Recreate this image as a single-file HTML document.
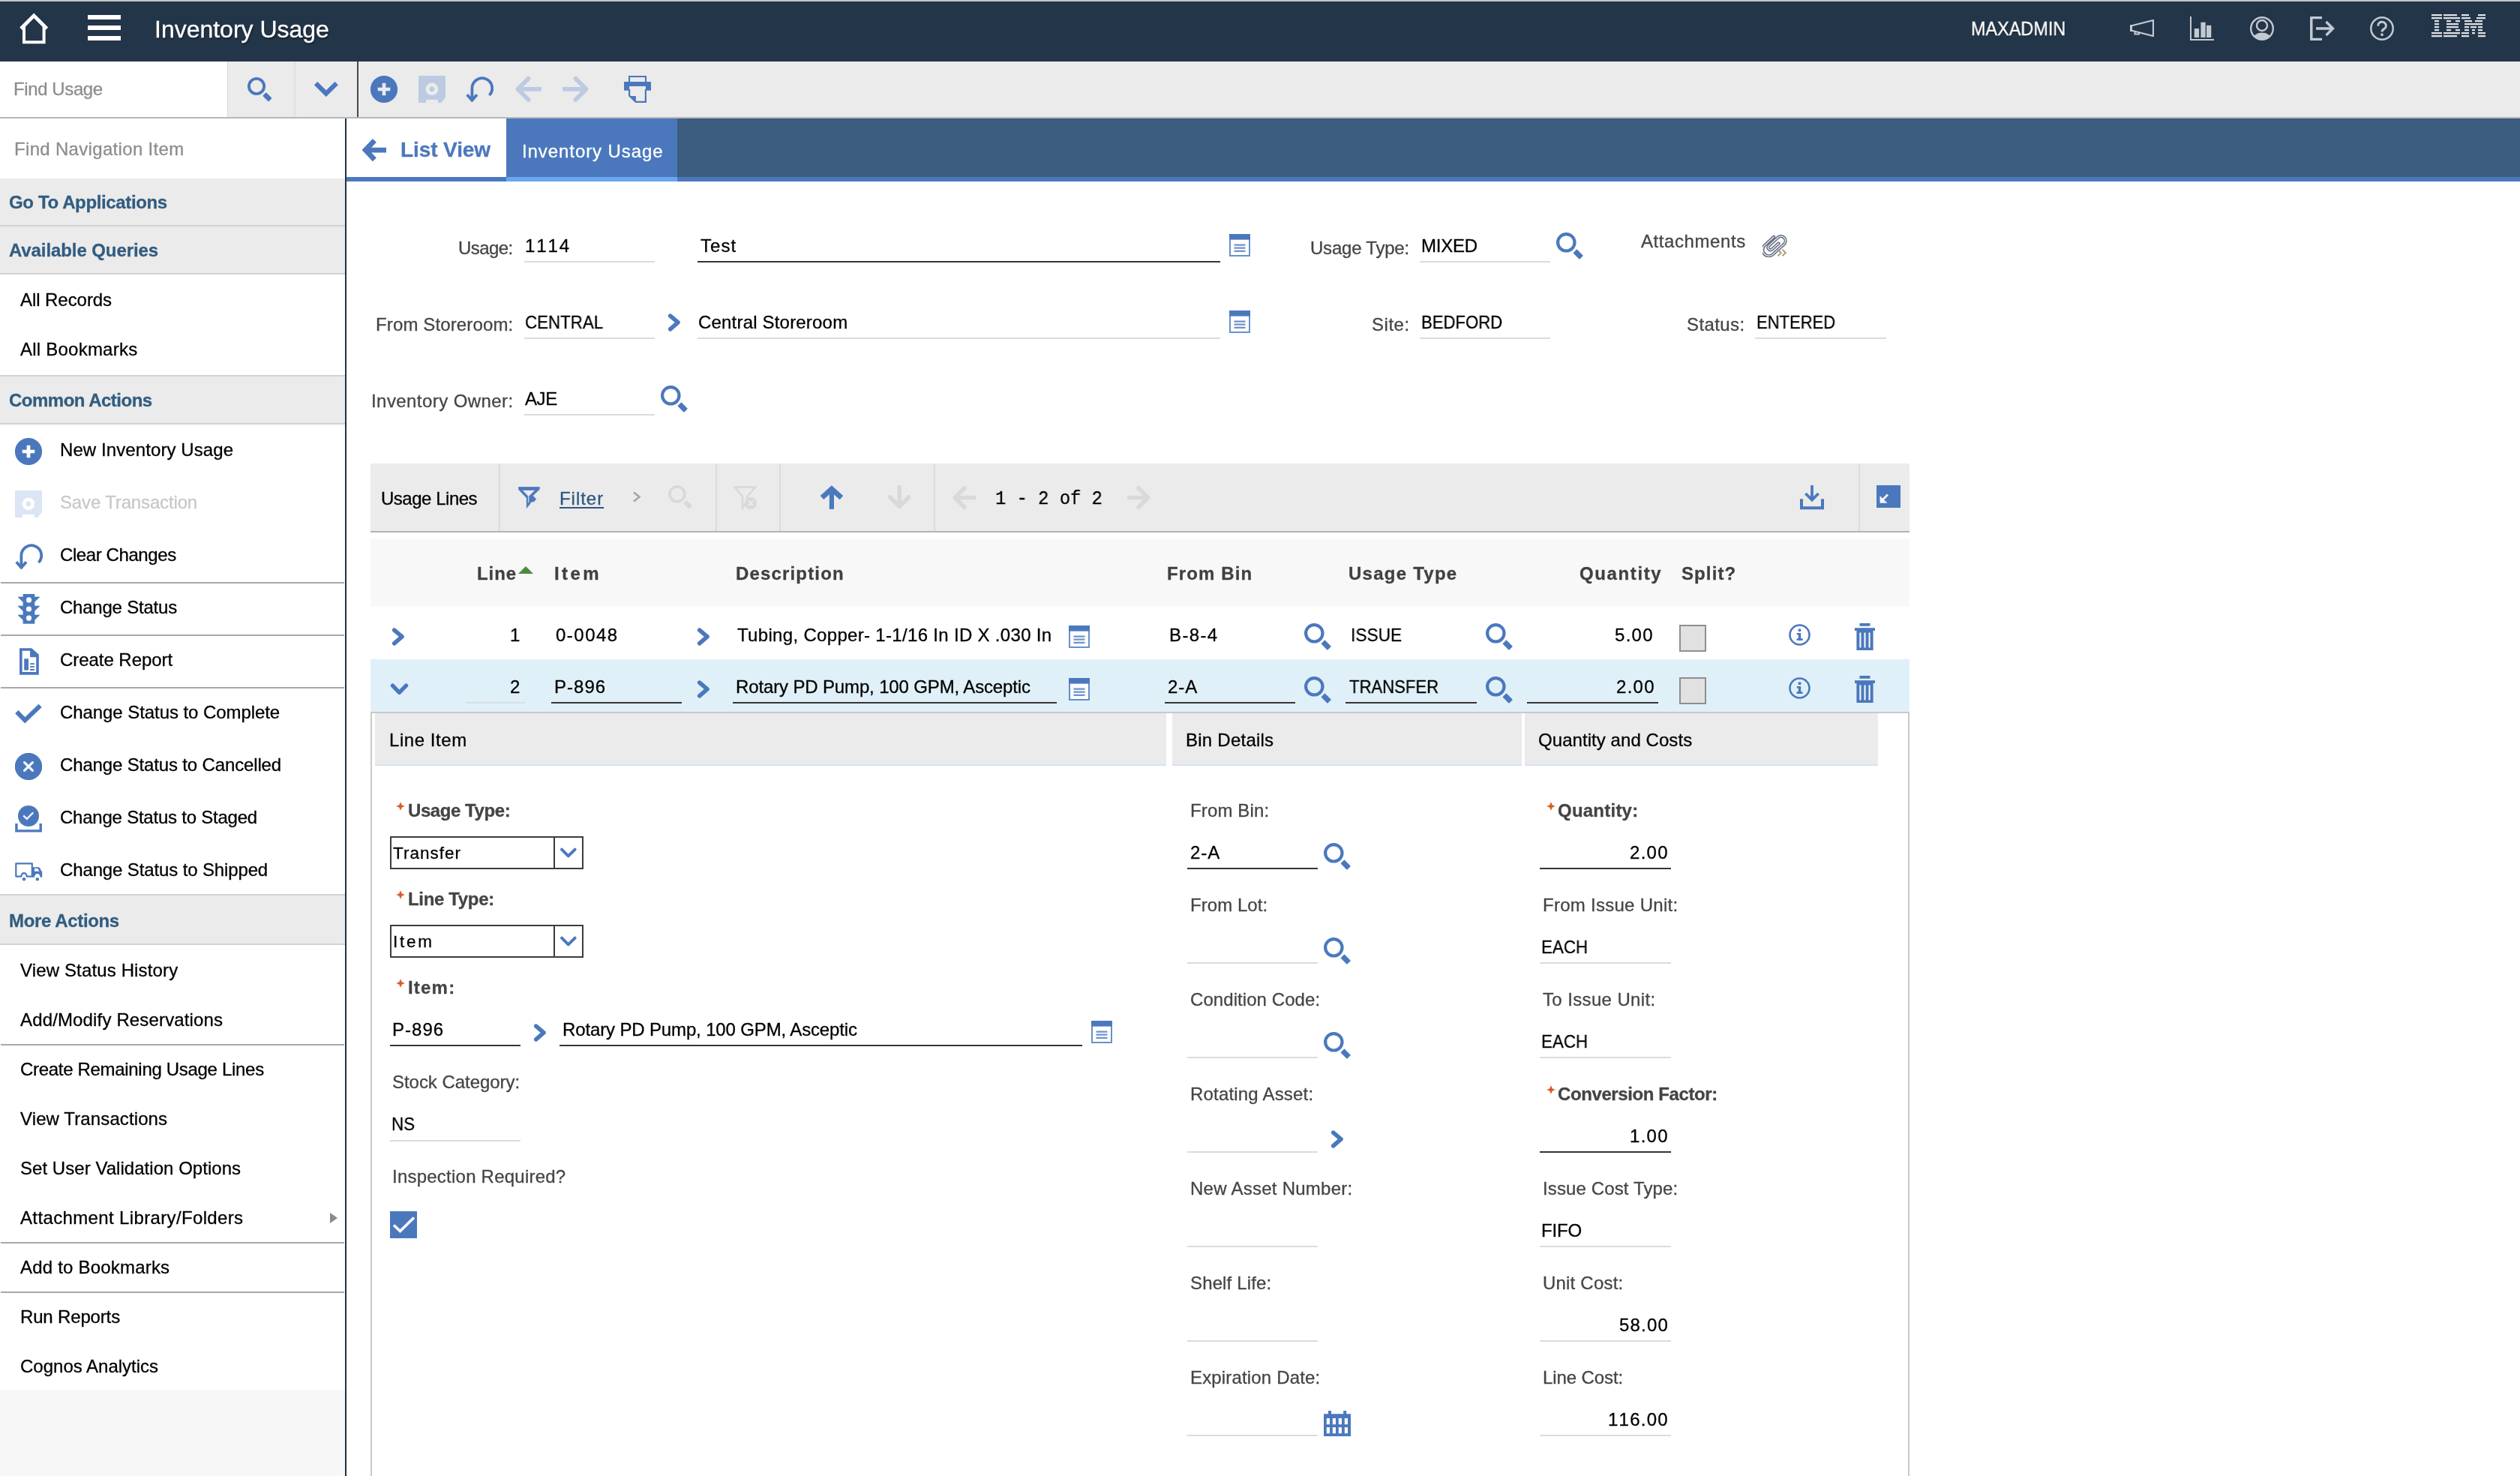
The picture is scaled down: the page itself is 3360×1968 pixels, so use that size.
<!DOCTYPE html>
<html><head><meta charset="utf-8"><title>Inventory Usage</title>
<style>
html,body{margin:0;padding:0;}
body{width:3360px;height:1968px;position:relative;overflow:hidden;background:#fff;font-family:"Liberation Sans",sans-serif;}
body>div,body>span,body>svg{position:absolute;display:block;}
body>span{white-space:nowrap;will-change:transform;-webkit-text-stroke:0.3px currentColor;}
svg{overflow:visible;}
</style></head><body>
<svg width="0" height="0" style="position:absolute"><defs>
<symbol id="home" viewBox="0 0 40 42"><path d="M1.9,21.3 L19.2,3.9 L36.5,21.3" fill="none" stroke="currentColor" stroke-width="4.8"/><path d="M6,19 V39.3 H32.6 V19" fill="none" stroke="currentColor" stroke-width="4"/></symbol>
<symbol id="mag" viewBox="0 0 36 36"><circle cx="13.3" cy="13.3" r="11.2" fill="none" stroke="currentColor" stroke-width="4.2"/><rect x="-6.1" y="-3.6" width="12.2" height="7.2" rx="1" transform="translate(29.2 29.1) rotate(45)" fill="currentColor"/></symbol>
<symbol id="chevd" viewBox="0 0 32 20"><path d="M2.1,2.1 L15.8,15.7 L29.7,2.1" fill="none" stroke="currentColor" stroke-width="6.2"/></symbol>
<symbol id="plusc" viewBox="0 0 36 36"><circle cx="18" cy="18" r="18.1" fill="currentColor"/><path d="M9.7,18 H26.3 M18,9.7 V26.3" stroke="var(--k,#fff)" stroke-width="4.7" fill="none"/></symbol>
<symbol id="save" viewBox="0 0 36 36"><path d="M0,0 H36 V28.7 L30.3,36 H26 V32 H10 V36 H0 Z" fill="currentColor"/><circle cx="17.9" cy="17.8" r="5.85" fill="none" stroke="var(--k,#fff)" stroke-width="4.9"/></symbol>
<symbol id="undo" viewBox="0 0 37 34"><path d="M8.4,31 V15.8 A13.4,13.4 0 1 1 31.4,25" fill="none" stroke="currentColor" stroke-width="3.8"/><path d="M1.8,24.2 L8.4,31.8 L15,24.2" fill="none" stroke="currentColor" stroke-width="3.8"/></symbol>
<symbol id="arl" viewBox="0 0 36 36"><path d="M5,17.8 H35.7 M18.6,3.6 L4.4,17.8 L18.6,32" fill="none" stroke="currentColor" stroke-width="5.8" stroke-linecap="round" stroke-linejoin="round"/></symbol>
<symbol id="arr" viewBox="0 0 36 36"><path d="M31,17.8 H0.3 M17.4,3.6 L31.6,17.8 L17.4,32" fill="none" stroke="currentColor" stroke-width="5.8" stroke-linecap="round" stroke-linejoin="round"/></symbol>
<symbol id="print" viewBox="0 0 36 36"><rect x="7" y="1" width="22" height="9" fill="var(--k,#ebebeb)" stroke="currentColor" stroke-width="2.1"/><rect x="0" y="8" width="36" height="11.7" fill="currentColor"/><path d="M7.1,14 H28.9 V34.8 H15.6 L7.1,26.6 Z" fill="var(--k,#ebebeb)"/><path d="M7.1,18 V26.6 L15.6,34.8 H28.9 V18" fill="none" stroke="currentColor" stroke-width="2.2"/><path d="M6.6,27 H15.9 V35.4 Z" fill="currentColor"/></symbol>
<symbol id="back" viewBox="0 0 33 32"><path d="M7,16.1 H32.6" fill="none" stroke="currentColor" stroke-width="6.9" stroke-linecap="round"/><path d="M17.4,3.3 L5.3,16.1 L17.4,28.9" fill="none" stroke="currentColor" stroke-width="6.9"/></symbol>
<symbol id="traffic" viewBox="0 0 29 40"><rect x="6.6" y="0" width="15.7" height="39.7" fill="currentColor"/><path d="M0.1,4.1 H6.8 V10.5 Z M0.1,16.1 H6.8 V22.5 Z M0.1,28.1 H6.8 V34.5 Z M28.7,4.1 H22 V10.5 Z M28.7,16.1 H22 V22.5 Z M28.7,28.1 H22 V34.5 Z" fill="currentColor" stroke="currentColor" stroke-width="0.8" stroke-linejoin="round"/><circle cx="14.5" cy="7.9" r="3.6" fill="#fff"/><circle cx="14.5" cy="20" r="3.6" fill="#fff"/><circle cx="14.5" cy="32.1" r="3.6" fill="#fff"/></symbol>
<symbol id="report" viewBox="0 0 26 36"><path fill-rule="evenodd" d="M0,0.2 H16.2 L25.8,8.8 V35.7 H0 Z M3.6,3.8 V32.1 H22.2 V12.2 H14.1 V3.8 Z" fill="currentColor"/><rect x="6.2" y="14.3" width="5.8" height="15.3" fill="currentColor"/><path d="M14.1,21.1 H20 M14.1,25.1 H20 M14.1,29 H20" stroke="currentColor" stroke-width="1.9" fill="none"/></symbol>
<symbol id="check" viewBox="0 0 37 27"><path d="M2.3,11.2 L13.3,22.3 L33.6,2.8" fill="none" stroke="currentColor" stroke-width="6"/></symbol>
<symbol id="xc" viewBox="0 0 36 36"><circle cx="18" cy="18" r="18.2" fill="currentColor"/><path d="M12.6,12.6 L23.4,23.4 M23.4,12.6 L12.6,23.4" stroke="#fff" stroke-width="3.2" stroke-linecap="round" opacity="0.95" fill="none"/></symbol>
<symbol id="staged" viewBox="0 0 36 37"><circle cx="18" cy="14" r="14" fill="currentColor"/><path d="M11.2,13.5 L15.8,17.8 L24.3,9.3" stroke="#fff" stroke-width="2.4" opacity="0.9" fill="none"/><path d="M1.9,24.1 V33.9 H34.2 V24.1" fill="none" stroke="currentColor" stroke-width="3.4"/></symbol>
<symbol id="truck" viewBox="0 0 37 25"><path d="M8.2,18.6 H1.3 V1.3 H22.8 V18.6 H15.8 Q15,14.2 12,14.2 Q9,14.2 8.2,18.6 Z" fill="none" stroke="currentColor" stroke-width="2.2" stroke-linejoin="round"/><path d="M22.8,6.2 H31 Q34,6.6 34.5,10.6 L36.2,12 V19.7 H33.8 Q33,15 29.8,15 Q26.6,15 25.8,19.7 H22.8 Z" fill="currentColor"/><path d="M26,7.9 H30.3 L32.4,11.7 H26 Z" fill="#fff"/><rect x="10" y="20.3" width="4" height="4" rx="1" fill="currentColor"/><rect x="27.8" y="20.3" width="4" height="4" rx="1" fill="currentColor"/></symbol>
<symbol id="detail" viewBox="0 0 28 30"><rect x="1" y="1" width="26" height="28" fill="#fff" stroke="currentColor" stroke-width="2" opacity="0.82"/><rect x="0" y="0" width="28" height="7.6" fill="currentColor"/><path d="M6.5,14.6 H21.5 M6.5,18.7 H21.5 M6.5,22.8 H21.5" stroke="currentColor" stroke-width="2.2" opacity="0.8" fill="none"/></symbol>
<symbol id="chevr" viewBox="0 0 18 28"><path d="M4.7,5.1 L15,13.9 L4.7,22.8" fill="none" stroke="currentColor" stroke-width="5.6" stroke-linecap="round" stroke-linejoin="round"/></symbol>
<symbol id="chevrs" viewBox="0 0 12 15"><path d="M2,1.5 L9.5,7.5 L2,13.5" fill="none" stroke="currentColor" stroke-width="2.6"/></symbol>
<symbol id="clip" viewBox="0 0 34 30"><path d="M15.2,2.8 L3,14 A8,8 0 0 0 13.8,26.2 L28.6,12.6 A6,6 0 0 0 20.6,3.6 L8.2,15 A3.2,3.2 0 0 0 12.6,19.6 L21.5,11.4" fill="none" stroke="#5d687d" stroke-width="4.2" stroke-linecap="round"/><path d="M15.2,2.8 L3,14 A8,8 0 0 0 13.8,26.2 L28.6,12.6 A6,6 0 0 0 20.6,3.6 L8.2,15 A3.2,3.2 0 0 0 12.6,19.6 L21.5,11.4" fill="none" stroke="#dfe3ea" stroke-width="1.5" stroke-linecap="round"/><path d="M20.5,19.8 L24.8,24 L20.5,28.2 M26.5,19.8 L30.8,24 L26.5,28.2" fill="none" stroke="#ab9c7e" stroke-width="1.9"/></symbol>
<symbol id="funnel" viewBox="0 0 29 29"><path fill-rule="evenodd" d="M0.3,0.3 H28.3 V3.4 L18.4,13 L19.8,12.2 L23.8,16.4 L21,19.8 L16.3,20.5 V22 L11.2,28.5 V15 L0.3,3.4 Z M5.2,4.5 H22.6 L14.6,12.4 V21.3 H12.9 V12.4 Z" fill="currentColor" stroke="currentColor" stroke-width="0.6" stroke-linejoin="round"/></symbol>
<symbol id="funnelx" viewBox="0 0 32 32"><path d="M1.5,1.5 H29 L18.5,14 V20 L12,29 V14 Z" fill="none" stroke="currentColor" stroke-width="2.6"/><circle cx="23" cy="23" r="8" fill="currentColor"/><path d="M19.8,19.8 L26.2,26.2 M26.2,19.8 L19.8,26.2" stroke="#ebebeb" stroke-width="2.2"/></symbol>
<symbol id="aru" viewBox="0 0 32 32"><path d="M15.9,31.9 V7" fill="none" stroke="currentColor" stroke-width="6.2"/><path d="M3,16.6 L15.9,4.9 L28.9,16.6" fill="none" stroke="currentColor" stroke-width="6.8"/></symbol>
<symbol id="ard" viewBox="0 0 30 32"><path d="M15.2,0.5 V28 M2.6,15.8 L15.2,28.4 L27.8,15.8" fill="none" stroke="currentColor" stroke-width="5.6" stroke-linecap="round" stroke-linejoin="round"/></symbol>
<symbol id="arls" viewBox="0 0 31 31"><path d="M4,15.5 H30.5 M16,2.8 L3.3,15.5 L16,28.2" fill="none" stroke="currentColor" stroke-width="5.6" stroke-linecap="round" stroke-linejoin="round"/></symbol>
<symbol id="arrs" viewBox="0 0 31 31"><path d="M27,15.5 H0.5 M15,2.8 L27.7,15.5 L15,28.2" fill="none" stroke="currentColor" stroke-width="5.6" stroke-linecap="round" stroke-linejoin="round"/></symbol>
<symbol id="dl" viewBox="0 0 32 33"><path d="M2,18.3 V30.2 H30 V18.3" fill="none" stroke="currentColor" stroke-width="4"/><path d="M16,0 V19 M7.4,11 L16,19.6 L24.6,11" fill="none" stroke="currentColor" stroke-width="3.7"/></symbol>
<symbol id="collapse" viewBox="0 0 32 30"><rect width="32" height="30" fill="currentColor"/><path d="M15,12.5 L6,21.5" stroke="#fff" stroke-width="3" opacity="0.9"/><path d="M4.5,14 V23.7 H14.5 Z" fill="#fff" opacity="0.92"/></symbol>
<symbol id="info" viewBox="0 0 29 29"><circle cx="14.5" cy="14.5" r="13" fill="none" stroke="currentColor" stroke-width="2.6"/><rect x="12.6" y="6.6" width="3.8" height="3.4" rx="0.8" fill="currentColor"/><path d="M10.8,12 H16.2 V19.3 H18.6 V22 H10.6 V19.3 H12.8 V14.6 H10.8 Z" fill="currentColor"/></symbol>
<symbol id="trash" viewBox="0 0 27 36"><rect x="6.5" y="0" width="14" height="3.8" fill="currentColor"/><rect x="0" y="6.2" width="27" height="3.8" fill="currentColor"/><rect x="2.4" y="10" width="22.2" height="26" fill="currentColor"/><path d="M7.4,12.5 V32.5 M13.5,12.5 V32.5 M19.6,12.5 V32.5" stroke="#fff" stroke-width="2.2" opacity="0.92"/></symbol>
<symbol id="cal" viewBox="0 0 36 34"><rect x="0" y="4.2" width="36" height="29.8" fill="currentColor"/><rect x="6" y="0" width="4" height="6" fill="currentColor"/><rect x="26.2" y="0" width="4" height="6" fill="currentColor"/><g fill="#fff"><rect x="3.8" y="10" width="4.2" height="8.2"/><rect x="11.8" y="10" width="4.2" height="8.2"/><rect x="19.8" y="10" width="4.2" height="8.2"/><rect x="27.8" y="10" width="4.2" height="8.2"/><rect x="3.8" y="22" width="4.2" height="8.2"/><rect x="11.8" y="22" width="4.2" height="8.2"/><rect x="19.8" y="22" width="4.2" height="8.2"/><rect x="27.8" y="22" width="4.2" height="8.2"/></g></symbol>
<symbol id="star" viewBox="0 0 12 12"><circle cx="6" cy="6" r="3.6" fill="#f6b06c" opacity="0.4"/><path d="M6,0 L7.6,4.4 L12,6 L7.6,7.6 L6,12 L4.4,7.6 L0,6 L4.4,4.4 Z" fill="#d65a2b"/></symbol>
<symbol id="cbx" viewBox="0 0 36 36"><rect width="36" height="36" fill="currentColor"/><path d="M5,18.5 L13.5,26.5 L32,8.5" fill="none" stroke="#fff" stroke-width="3.6"/></symbol>
<symbol id="mega" viewBox="0 0 32 23"><path d="M1.2,8.5 L31,1 V22 L1.2,14.5 Z" fill="none" stroke="currentColor" stroke-width="2.2"/><rect x="0" y="7" width="3" height="9" fill="currentColor"/><path d="M6.5,15.5 V19.5 H12 V17" fill="none" stroke="currentColor" stroke-width="2"/></symbol>
<symbol id="bars" viewBox="0 0 32 32"><path d="M1,0 V31 H32" fill="none" stroke="currentColor" stroke-width="2"/><rect x="5.8" y="16" width="6.3" height="12" fill="currentColor"/><rect x="14.4" y="7.7" width="6.3" height="20.3" fill="currentColor"/><rect x="22" y="11.8" width="6.3" height="16.2" fill="currentColor"/></symbol>
<symbol id="user" viewBox="0 0 32 32"><clipPath id="uc"><circle cx="16" cy="16" r="14.6"/></clipPath><circle cx="16" cy="16" r="14.8" fill="none" stroke="currentColor" stroke-width="2.4"/><circle cx="16" cy="12" r="7" fill="none" stroke="currentColor" stroke-width="2.4"/><ellipse cx="16" cy="30" rx="12" ry="8.5" fill="currentColor" clip-path="url(#uc)"/></symbol>
<symbol id="logout" viewBox="0 0 33 32"><path d="M16,1.5 H1.8 V30.5 H16" fill="none" stroke="currentColor" stroke-width="3.4"/><path d="M8,16 H30 M21.5,7 L30.5,16 L21.5,25" fill="none" stroke="currentColor" stroke-width="3.4"/></symbol>
<symbol id="help" viewBox="0 0 32 32"><circle cx="16" cy="16" r="14.7" fill="none" stroke="currentColor" stroke-width="2.5"/><path d="M10.8,12.6 A5.3,5 0 1 1 18.6,16.6 Q16,18 16,20.5" fill="none" stroke="currentColor" stroke-width="3"/><rect x="14.3" y="22.6" width="3.4" height="3.4" rx="1" fill="currentColor"/></symbol>
<symbol id="tri" viewBox="0 0 20 10"><path d="M10,0 L20,10 H0 Z" fill="#4c8b3e"/></symbol>
<symbol id="subm" viewBox="0 0 10 14"><path d="M0,0 L10,7 L0,14 Z" fill="#8a8a8a"/></symbol>
<symbol id="chevdr" viewBox="0 0 26 18"><path d="M3.5,4.1 L12.4,13.4 L21.5,4.1" fill="none" stroke="currentColor" stroke-width="5.4" stroke-linecap="round" stroke-linejoin="round"/></symbol>
<symbol id="chevds" viewBox="0 0 26 18"><path d="M3.2,3.8 L12.4,13.2 L21.8,3.8" fill="none" stroke="currentColor" stroke-width="4.1" stroke-linecap="round" stroke-linejoin="round"/></symbol>
</defs>
</svg>
<div style="left:0px;top:0px;width:3360px;height:2px;background:#c6c6c6;"></div>
<div style="left:0px;top:2px;width:3360px;height:80px;background:#233548;"></div>
<div style="left:0px;top:82px;width:3360px;height:74px;background:#ebebeb;"></div>
<div style="left:0px;top:156px;width:3360px;height:2px;background:#b7b7b7;"></div>
<div style="left:0px;top:82px;width:303px;height:74px;background:#fff;"></div>
<div style="left:303px;top:82px;width:1px;height:74px;background:#d9d9d9;"></div>
<div style="left:392px;top:82px;width:2px;height:74px;background:#e0e0e0;"></div>
<div style="left:476px;top:82px;width:2px;height:74px;background:#4a4a4a;"></div>
<svg style="left:26px;top:17px;color:#fff;" width="40" height="42"><use href="#home"/></svg>
<div style="left:117px;top:20px;width:44px;height:6px;background:#fff;"></div>
<div style="left:117px;top:34px;width:44px;height:6px;background:#fff;"></div>
<div style="left:117px;top:48px;width:44px;height:6px;background:#fff;"></div>
<span id="t1" style="top:22.9px;font-size:32px;line-height:32px;color:#fff;letter-spacing:-0.01px;left:206.3px;text-shadow:1px 2px 2px rgba(0,0,0,.45);">Inventory Usage</span>
<span id="t2" style="top:25.8px;font-size:25px;line-height:25px;color:#fff;left:2628.0px;transform:scaleX(0.9370);transform-origin:left center;text-shadow:1px 1px 2px rgba(0,0,0,.4);">MAXADMIN</span>
<svg style="left:2840px;top:25.5px;color:#c3c9d1;" width="32" height="23"><use href="#mega"/></svg>
<svg style="left:2920px;top:22px;color:#c3c9d1;" width="32" height="32"><use href="#bars"/></svg>
<svg style="left:3000px;top:22px;color:#c3c9d1;" width="32" height="32"><use href="#user"/></svg>
<svg style="left:3080px;top:22px;color:#c3c9d1;" width="33" height="32"><use href="#logout"/></svg>
<svg style="left:3160px;top:22px;color:#c3c9d1;" width="32" height="32"><use href="#help"/></svg>
<svg style="left:3242px;top:19px" width="72" height="31"><rect x="0" y="0" width="72" height="30.2" fill="#4a5c6e" opacity="0"/><path d="M0,0h14v2.2h-14zM16,0h18v2.2h-18zM40,0h10v2.2h-10zM62,0h10v2.2h-10zM0,4h14v2.2h-14zM16,4h22v2.2h-22zM40,4h12v2.2h-12zM60,4h12v2.2h-12zM4,8h6v2.2h-6zM20,8h6v2.2h-6zM32,8h6v2.2h-6zM44,8h10v2.2h-10zM58,8h10v2.2h-10zM4,12h6v2.2h-6zM20,12h16v2.2h-16zM44,12h24v2.2h-24zM4,16h6v2.2h-6zM20,16h16v2.2h-16zM44,16h6v2.2h-6zM52,16h8v2.2h-8zM62,16h6v2.2h-6zM4,20h6v2.2h-6zM20,20h6v2.2h-6zM32,20h6v2.2h-6zM44,20h6v2.2h-6zM54,20h4v2.2h-4zM62,20h6v2.2h-6zM0,24h14v2.2h-14zM16,24h22v2.2h-22zM40,24h10v2.2h-10zM54,24h4v2.2h-4zM62,24h10v2.2h-10zM0,28h14v2.2h-14zM16,28h18v2.2h-18zM40,28h10v2.2h-10zM62,28h10v2.2h-10z" fill="#dde1e6"/></svg>
<span id="t3" style="top:106.7px;font-size:24px;line-height:24px;color:#8d8d8d;letter-spacing:-0.40px;left:18.3px;">Find Usage</span>
<svg style="left:329.5px;top:103px;color:#4b78bd;" width="32.6" height="32.6"><use href="#mag"/></svg>
<svg style="left:419px;top:109px;color:#4b78bd;" width="32" height="20"><use href="#chevd"/></svg>
<svg style="left:494px;top:101px;color:#4b78bd;--k:#ebebeb;" width="36" height="36"><use href="#plusc"/></svg>
<svg style="left:558px;top:101px;color:#bccbe1;--k:#ebebeb;" width="36" height="36"><use href="#save"/></svg>
<svg style="left:621.4px;top:102.4px;color:#4b78bd;" width="37" height="34"><use href="#undo"/></svg>
<svg style="left:686px;top:101px;color:#bccbe1;" width="36" height="36"><use href="#arl"/></svg>
<svg style="left:750px;top:101px;color:#bccbe1;" width="36" height="36"><use href="#arr"/></svg>
<svg style="left:832px;top:101px;color:#4b78bd;" width="36" height="36"><use href="#print"/></svg>
<div style="left:0px;top:158px;width:460px;height:1695px;background:#fff;"></div>
<div style="left:0px;top:1853px;width:460px;height:115px;background:#f7f7f7;"></div>
<div style="left:460px;top:158px;width:2px;height:1810px;background:#1d3347;"></div>
<span id="t4" style="top:186.7px;font-size:24px;line-height:24px;color:#8d8d8d;letter-spacing:0.32px;left:19.3px;">Find Navigation Item</span>
<div style="left:0px;top:238px;width:460px;height:62px;background:#ebebeb;"></div>
<div style="left:0px;top:300px;width:460px;height:2px;background:#d2d2d2;"></div>
<span id="t5" style="top:257.7px;font-size:24px;line-height:24px;font-weight:700;color:#325c80;letter-spacing:-0.36px;left:12.3px;">Go To Applications</span>
<div style="left:0px;top:302px;width:460px;height:62px;background:#ebebeb;"></div>
<div style="left:0px;top:364px;width:460px;height:2px;background:#d2d2d2;"></div>
<span id="t6" style="top:321.7px;font-size:24px;line-height:24px;font-weight:700;color:#325c80;letter-spacing:-0.09px;left:12.3px;">Available Queries</span>
<span id="t7" style="top:387.7px;font-size:24px;line-height:24px;letter-spacing:-0.06px;left:26.8px;">All Records</span>
<span id="t8" style="top:453.7px;font-size:24px;line-height:24px;letter-spacing:0.23px;left:26.8px;">All Bookmarks</span>
<div style="left:0px;top:500px;width:460px;height:2px;background:#d2d2d2;"></div>
<div style="left:0px;top:502px;width:460px;height:62px;background:#ebebeb;"></div>
<div style="left:0px;top:564px;width:460px;height:2px;background:#d2d2d2;"></div>
<span id="t9" style="top:521.7px;font-size:24px;line-height:24px;font-weight:700;color:#325c80;letter-spacing:-0.51px;left:12.3px;">Common Actions</span>
<svg style="left:20px;top:584.0px;color:#4b78bd;--k:#fff;" width="36" height="36"><use href="#plusc"/></svg>
<span id="t10" style="top:588.2px;font-size:24px;line-height:24px;letter-spacing:0.09px;left:80.3px;">New Inventory Usage</span>
<svg style="left:20px;top:654.0px;color:#dbe5f3;--k:#fff;" width="36" height="36"><use href="#save"/></svg>
<span id="t11" style="top:658.2px;font-size:24px;line-height:24px;color:#c8c8c8;letter-spacing:-0.15px;left:80.3px;">Save Transaction</span>
<svg style="left:20px;top:725.0px;color:#4b78bd;" width="37" height="34"><use href="#undo"/></svg>
<span id="t12" style="top:728.2px;font-size:24px;line-height:24px;letter-spacing:-0.41px;left:80.3px;">Clear Changes</span>
<svg style="left:23.5px;top:792.0px;color:#4b78bd;" width="29" height="40"><use href="#traffic"/></svg>
<span id="t13" style="top:798.2px;font-size:24px;line-height:24px;letter-spacing:-0.22px;left:80.3px;">Change Status</span>
<svg style="left:26px;top:864.0px;color:#4b78bd;" width="26" height="36"><use href="#report"/></svg>
<span id="t14" style="top:868.2px;font-size:24px;line-height:24px;letter-spacing:-0.05px;left:80.3px;">Create Report</span>
<svg style="left:20px;top:937.5px;color:#4b78bd;" width="37" height="27"><use href="#check"/></svg>
<span id="t15" style="top:938.2px;font-size:24px;line-height:24px;letter-spacing:-0.07px;left:80.3px;">Change Status to Complete</span>
<svg style="left:20px;top:1004.0px;color:#4b78bd;" width="36" height="36"><use href="#xc"/></svg>
<span id="t16" style="top:1008.2px;font-size:24px;line-height:24px;letter-spacing:-0.15px;left:80.3px;">Change Status to Cancelled</span>
<svg style="left:20px;top:1073.5px;color:#4b78bd;" width="36" height="37"><use href="#staged"/></svg>
<span id="t17" style="top:1078.2px;font-size:24px;line-height:24px;letter-spacing:-0.23px;left:80.3px;">Change Status to Staged</span>
<svg style="left:20px;top:1149.5px;color:#4b78bd;" width="37" height="25"><use href="#truck"/></svg>
<span id="t18" style="top:1148.2px;font-size:24px;line-height:24px;letter-spacing:-0.13px;left:80.3px;">Change Status to Shipped</span>
<div style="left:1px;top:776px;width:458px;height:2px;background:#a9a9a9;"></div>
<div style="left:1px;top:846px;width:458px;height:2px;background:#a9a9a9;"></div>
<div style="left:1px;top:916px;width:458px;height:2px;background:#a9a9a9;"></div>
<div style="left:0px;top:1192px;width:460px;height:2px;background:#d2d2d2;"></div>
<div style="left:0px;top:1194px;width:460px;height:64px;background:#ebebeb;"></div>
<div style="left:0px;top:1258px;width:460px;height:2px;background:#d2d2d2;"></div>
<span id="t19" style="top:1215.7px;font-size:24px;line-height:24px;font-weight:700;color:#325c80;letter-spacing:-0.36px;left:12.3px;">More Actions</span>
<span id="t20" style="top:1282.2px;font-size:24px;line-height:24px;letter-spacing:0.14px;left:26.8px;">View Status History</span>
<span id="t21" style="top:1348.2px;font-size:24px;line-height:24px;letter-spacing:0.15px;left:26.8px;">Add/Modify Reservations</span>
<span id="t22" style="top:1414.2px;font-size:24px;line-height:24px;letter-spacing:-0.31px;left:26.8px;">Create Remaining Usage Lines</span>
<span id="t23" style="top:1480.2px;font-size:24px;line-height:24px;letter-spacing:0.11px;left:26.8px;">View Transactions</span>
<span id="t24" style="top:1546.2px;font-size:24px;line-height:24px;letter-spacing:0.04px;left:26.8px;">Set User Validation Options</span>
<span id="t25" style="top:1612.2px;font-size:24px;line-height:24px;letter-spacing:0.36px;left:26.8px;">Attachment Library/Folders</span>
<span id="t26" style="top:1678.2px;font-size:24px;line-height:24px;letter-spacing:0.20px;left:26.8px;">Add to Bookmarks</span>
<span id="t27" style="top:1744.2px;font-size:24px;line-height:24px;letter-spacing:-0.16px;left:26.8px;">Run Reports</span>
<span id="t28" style="top:1810.2px;font-size:24px;line-height:24px;left:26.8px;">Cognos Analytics</span>
<div style="left:1px;top:1392px;width:458px;height:2px;background:#a9a9a9;"></div>
<div style="left:1px;top:1656px;width:458px;height:2px;background:#a9a9a9;"></div>
<div style="left:1px;top:1722px;width:458px;height:2px;background:#a9a9a9;"></div>
<svg style="left:440px;top:1617px;" width="10" height="14"><use href="#subm"/></svg>
<div style="left:462px;top:158px;width:2898px;height:78px;background:#3c5c80;"></div>
<div style="left:462px;top:236px;width:2898px;height:6px;background:#4b78bd;"></div>
<div style="left:462px;top:158px;width:213px;height:78px;background:#fff;"></div>
<div style="left:675px;top:158px;width:228px;height:78px;background:#4b78bd;"></div>
<div style="left:675px;top:236px;width:228px;height:6px;background:#68a7f0;"></div>
<svg style="left:481.5px;top:184px;color:#4b78bd;" width="33" height="32"><use href="#back"/></svg>
<span id="t29" style="top:186.3px;font-size:28px;line-height:28px;font-weight:700;color:#4b78bd;letter-spacing:-0.10px;left:534.0px;">List View</span>
<span id="t30" style="top:189.7px;font-size:24px;line-height:24px;color:#fff;letter-spacing:0.92px;left:695.8px;">Inventory Usage</span>
<span id="t31" style="top:318.7px;font-size:24px;line-height:24px;color:#454545;letter-spacing:-0.58px;right:2676.6px;">Usage:</span>
<span id="t32" style="top:420.7px;font-size:24px;line-height:24px;color:#454545;letter-spacing:0.13px;right:2675.9px;">From Storeroom:</span>
<span id="t33" style="top:522.7px;font-size:24px;line-height:24px;color:#454545;letter-spacing:0.43px;right:2675.6px;">Inventory Owner:</span>
<span id="t34" style="top:315.7px;font-size:24px;line-height:24px;letter-spacing:1.92px;left:700.0px;font-kerning:none;">1114</span>
<div style="left:699px;top:348px;width:174px;height:2px;background:#dcdcdc;"></div>
<span id="t35" style="top:315.7px;font-size:24px;line-height:24px;letter-spacing:1.05px;left:934.0px;">Test</span>
<div style="left:930px;top:348px;width:697px;height:2px;background:#363636;"></div>
<svg style="left:1639px;top:312px;color:#4b78bd;" width="28" height="30"><use href="#detail"/></svg>
<span id="t36" style="top:417.7px;font-size:24px;line-height:24px;left:700.0px;transform:scaleX(0.9297);transform-origin:left center;">CENTRAL</span>
<div style="left:699px;top:450px;width:174px;height:2px;background:#dcdcdc;"></div>
<svg style="left:888.8px;top:416px;color:#4b78bd;" width="18" height="28"><use href="#chevr"/></svg>
<span id="t37" style="top:417.7px;font-size:24px;line-height:24px;letter-spacing:0.19px;left:931.0px;">Central Storeroom</span>
<div style="left:930px;top:450px;width:697px;height:2px;background:#dcdcdc;"></div>
<svg style="left:1639px;top:414px;color:#4b78bd;" width="28" height="30"><use href="#detail"/></svg>
<span id="t38" style="top:519.7px;font-size:24px;line-height:24px;letter-spacing:-0.43px;left:700.0px;">AJE</span>
<div style="left:699px;top:552px;width:174px;height:2px;background:#dcdcdc;"></div>
<svg style="left:880.6px;top:514px;color:#4b78bd;" width="36" height="36"><use href="#mag"/></svg>
<span id="t39" style="top:318.7px;font-size:24px;line-height:24px;color:#454545;letter-spacing:-0.22px;right:1481.2px;">Usage Type:</span>
<span id="t40" style="top:315.7px;font-size:24px;line-height:24px;letter-spacing:-0.21px;left:1894.5px;">MIXED</span>
<div style="left:1893px;top:348px;width:174px;height:2px;background:#dcdcdc;"></div>
<svg style="left:2074.8px;top:309.8px;color:#4b78bd;" width="36" height="36"><use href="#mag"/></svg>
<span id="t41" style="top:309.7px;font-size:24px;line-height:24px;color:#454545;letter-spacing:0.58px;left:2188.0px;">Attachments</span>
<svg style="left:2349.5px;top:313px;" width="34" height="30"><use href="#clip"/></svg>
<span id="t42" style="top:420.7px;font-size:24px;line-height:24px;color:#454545;letter-spacing:0.53px;right:1480.5px;">Site:</span>
<span id="t43" style="top:417.7px;font-size:24px;line-height:24px;left:1894.5px;transform:scaleX(0.9217);transform-origin:left center;">BEDFORD</span>
<div style="left:1893px;top:450px;width:174px;height:2px;background:#dcdcdc;"></div>
<span id="t44" style="top:420.7px;font-size:24px;line-height:24px;color:#454545;letter-spacing:0.41px;right:1033.1px;">Status:</span>
<span id="t45" style="top:417.7px;font-size:24px;line-height:24px;left:2342.0px;transform:scaleX(0.9169);transform-origin:left center;">ENTERED</span>
<div style="left:2340px;top:450px;width:175px;height:2px;background:#dcdcdc;"></div>
<div style="left:494px;top:618px;width:2052px;height:90px;background:#ebebeb;"></div>
<div style="left:494px;top:708px;width:2052px;height:2px;background:#b3b3b3;"></div>
<div style="left:665px;top:618px;width:2px;height:90px;background:#dcdcdc;"></div>
<div style="left:954px;top:618px;width:2px;height:90px;background:#dcdcdc;"></div>
<div style="left:1039px;top:618px;width:2px;height:90px;background:#dcdcdc;"></div>
<div style="left:1245px;top:618px;width:2px;height:90px;background:#dcdcdc;"></div>
<div style="left:2478px;top:618px;width:2px;height:90px;background:#dcdcdc;"></div>
<span id="t46" style="top:652.7px;font-size:24px;line-height:24px;letter-spacing:-0.48px;left:508.0px;">Usage Lines</span>
<svg style="left:690.5px;top:648.5px;color:#4b78bd;" width="29" height="29"><use href="#funnel"/></svg>
<span id="t47" style="top:653.2px;font-size:24px;line-height:24px;color:#2f5780;letter-spacing:0.96px;left:746.0px;text-decoration:underline;text-decoration-thickness:2px;text-underline-offset:3px;">Filter</span>
<svg style="left:843px;top:654.5px;color:#a9a69c;" width="12" height="15"><use href="#chevrs"/></svg>
<svg style="left:891px;top:647.3px;color:#d9d9d9;" width="32" height="32"><use href="#mag"/></svg>
<svg style="left:977.5px;top:647.5px;color:#d9d9d9;" width="32" height="32"><use href="#funnelx"/></svg>
<svg style="left:1093px;top:647px;color:#4b78bd;" width="32" height="32"><use href="#aru"/></svg>
<svg style="left:1184px;top:647px;color:#d9d9d9;" width="30" height="32"><use href="#ard"/></svg>
<svg style="left:1269.6px;top:647.7px;color:#d9d9d9;" width="31" height="31"><use href="#arls"/></svg>
<span id="t48" style="top:652.2px;font-size:26.5px;line-height:26.5px;font-family:Liberation Mono,monospace;left:1326.5px;transform:scaleX(0.8992);transform-origin:left center;">1 - 2 of 2</span>
<svg style="left:1503.4px;top:647.7px;color:#d9d9d9;" width="31" height="31"><use href="#arrs"/></svg>
<svg style="left:2400px;top:646.7px;color:#4b78bd;" width="32" height="33"><use href="#dl"/></svg>
<svg style="left:2502px;top:647px;color:#4b78bd;" width="32" height="30"><use href="#collapse"/></svg>
<div style="left:494px;top:719px;width:2052px;height:90px;background:#f8f8f8;"></div>
<span id="t49" style="top:752.7px;font-size:24px;line-height:24px;font-weight:700;color:#404040;letter-spacing:0.94px;left:636.0px;">Line</span>
<svg style="left:691px;top:755px;" width="20" height="10"><use href="#tri"/></svg>
<span id="t50" style="top:752.7px;font-size:24px;line-height:24px;font-weight:700;color:#404040;letter-spacing:3.43px;left:738.5px;">Item</span>
<span id="t51" style="top:752.7px;font-size:24px;line-height:24px;font-weight:700;color:#404040;letter-spacing:1.16px;left:981.0px;">Description</span>
<span id="t52" style="top:752.7px;font-size:24px;line-height:24px;font-weight:700;color:#404040;letter-spacing:1.12px;left:1556.0px;">From Bin</span>
<span id="t53" style="top:752.7px;font-size:24px;line-height:24px;font-weight:700;color:#404040;letter-spacing:1.25px;left:1798.0px;">Usage Type</span>
<span id="t54" style="top:752.7px;font-size:24px;line-height:24px;font-weight:700;color:#404040;letter-spacing:1.62px;left:2106.0px;">Quantity</span>
<span id="t55" style="top:752.7px;font-size:24px;line-height:24px;font-weight:700;color:#404040;letter-spacing:1.10px;left:2242.0px;">Split?</span>
<div style="left:494px;top:879px;width:2052px;height:70px;background:#e0f0f8;"></div>
<div style="left:494px;top:949px;width:2052px;height:2px;background:#c9c9c9;"></div>
<svg style="left:520.6px;top:834.7px;color:#4b78bd;" width="18" height="28"><use href="#chevr"/></svg>
<span id="t56" style="top:834.7px;font-size:24px;line-height:24px;right:2666.5px;font-kerning:none;">1</span>
<span id="t57" style="top:834.7px;font-size:24px;line-height:24px;letter-spacing:1.49px;left:740.5px;font-kerning:none;">0-0048</span>
<svg style="left:928.1px;top:834.7px;color:#4b78bd;" width="18" height="28"><use href="#chevr"/></svg>
<span id="t58" style="top:834.7px;font-size:24px;line-height:24px;letter-spacing:0.32px;left:982.5px;">Tubing, Copper- 1-1/16 In ID X .030 In</span>
<svg style="left:1424.5px;top:834.4px;color:#4b78bd;" width="28" height="30"><use href="#detail"/></svg>
<span id="t59" style="top:834.7px;font-size:24px;line-height:24px;letter-spacing:1.37px;left:1559.0px;">B-8-4</span>
<svg style="left:1739px;top:831px;color:#4b78bd;" width="36" height="36"><use href="#mag"/></svg>
<span id="t60" style="top:834.7px;font-size:24px;line-height:24px;left:1801.0px;transform:scaleX(0.9463);transform-origin:left center;">ISSUE</span>
<svg style="left:1981px;top:831px;color:#4b78bd;" width="36" height="36"><use href="#mag"/></svg>
<span id="t61" style="top:834.7px;font-size:24px;line-height:24px;letter-spacing:1.28px;right:1155.2px;font-kerning:none;">5.00</span>
<div style="left:2239px;top:833px;width:36px;height:36px;background:#e1e1e1;box-sizing:border-box;border:2px solid #8f8f8f;"></div>
<svg style="left:2384.5px;top:832.1px;color:#4b78bd;" width="29" height="29"><use href="#info"/></svg>
<svg style="left:2472.5px;top:830.9px;color:#4b78bd;" width="27" height="36"><use href="#trash"/></svg>
<svg style="left:519.5px;top:909.9px;color:#4b78bd;" width="26" height="18"><use href="#chevdr"/></svg>
<span id="t62" style="top:903.7px;font-size:24px;line-height:24px;right:2666.5px;font-kerning:none;">2</span>
<span id="t63" style="top:903.7px;font-size:24px;line-height:24px;letter-spacing:1.03px;left:738.5px;">P-896</span>
<svg style="left:928.1px;top:904.7px;color:#4b78bd;" width="18" height="28"><use href="#chevr"/></svg>
<span id="t64" style="top:903.7px;font-size:24px;line-height:24px;letter-spacing:-0.14px;left:980.5px;">Rotary PD Pump, 100 GPM, Asceptic</span>
<svg style="left:1424.5px;top:904.4px;color:#4b78bd;" width="28" height="30"><use href="#detail"/></svg>
<span id="t65" style="top:903.7px;font-size:24px;line-height:24px;letter-spacing:0.90px;left:1557.0px;">2-A</span>
<svg style="left:1739px;top:902.2px;color:#4b78bd;" width="36" height="36"><use href="#mag"/></svg>
<span id="t66" style="top:903.7px;font-size:24px;line-height:24px;left:1799.0px;transform:scaleX(0.9213);transform-origin:left center;">TRANSFER</span>
<svg style="left:1981px;top:902.2px;color:#4b78bd;" width="36" height="36"><use href="#mag"/></svg>
<span id="t67" style="top:903.7px;font-size:24px;line-height:24px;letter-spacing:1.28px;right:1153.2px;font-kerning:none;">2.00</span>
<div style="left:2239px;top:903px;width:36px;height:36px;background:#e1e1e1;box-sizing:border-box;border:2px solid #8f8f8f;"></div>
<svg style="left:2384.5px;top:903.3000000000001px;color:#4b78bd;" width="29" height="29"><use href="#info"/></svg>
<svg style="left:2472.5px;top:900.9px;color:#4b78bd;" width="27" height="36"><use href="#trash"/></svg>
<div style="left:621px;top:936px;width:79px;height:2px;background:#d9e1e6;"></div>
<div style="left:735px;top:936px;width:174px;height:2px;background:#363636;"></div>
<div style="left:977px;top:936px;width:432px;height:2px;background:#363636;"></div>
<div style="left:1553px;top:936px;width:174px;height:2px;background:#363636;"></div>
<div style="left:1794px;top:936px;width:175px;height:2px;background:#363636;"></div>
<div style="left:2036px;top:936px;width:175px;height:2px;background:#363636;"></div>
<div style="left:494px;top:951px;width:2px;height:1017px;background:#c9c9c9;"></div>
<div style="left:2544px;top:951px;width:2px;height:1017px;background:#c9c9c9;"></div>
<div style="left:500px;top:951px;width:1055px;height:68px;background:#ebebeb;"></div>
<div style="left:500px;top:1019px;width:1055px;height:2px;background:#d6e2ef;"></div>
<span id="t68" style="top:975.0px;font-size:24px;line-height:24px;letter-spacing:0.56px;left:518.5px;">Line Item</span>
<div style="left:1563px;top:951px;width:466px;height:68px;background:#ebebeb;"></div>
<div style="left:1563px;top:1019px;width:466px;height:2px;background:#d6e2ef;"></div>
<span id="t69" style="top:975.0px;font-size:24px;line-height:24px;letter-spacing:0.24px;left:1581.0px;">Bin Details</span>
<div style="left:2033px;top:951px;width:471px;height:68px;background:#ebebeb;"></div>
<div style="left:2033px;top:1019px;width:471px;height:2px;background:#d6e2ef;"></div>
<span id="t70" style="top:975.0px;font-size:24px;line-height:24px;letter-spacing:0.06px;left:2051.0px;">Quantity and Costs</span>
<svg style="left:528px;top:1069.0px;" width="12" height="12"><use href="#star"/></svg>
<span id="t71" style="top:1069.2px;font-size:24px;line-height:24px;font-weight:700;color:#444;letter-spacing:-0.43px;left:543.5px;">Usage Type:</span>
<div style="left:520px;top:1115px;width:258px;height:44px;background:#fff;box-sizing:border-box;border:2px solid #3c3c3c;"></div>
<div style="left:738px;top:1115px;width:2px;height:44px;background:#3c3c3c;"></div>
<span id="t72" style="top:1127.0px;font-size:22.5px;line-height:22.5px;letter-spacing:1.01px;left:523.8px;">Transfer</span>
<svg style="left:745.6px;top:1128.6px;color:#4b78bd;" width="24.6" height="17"><use href="#chevds"/></svg>
<svg style="left:528px;top:1187.0px;" width="12" height="12"><use href="#star"/></svg>
<span id="t73" style="top:1187.2px;font-size:24px;line-height:24px;font-weight:700;color:#444;letter-spacing:-0.34px;left:543.5px;">Line Type:</span>
<div style="left:520px;top:1233px;width:258px;height:44px;background:#fff;box-sizing:border-box;border:2px solid #3c3c3c;"></div>
<div style="left:738px;top:1233px;width:2px;height:44px;background:#3c3c3c;"></div>
<span id="t74" style="top:1245.0px;font-size:22.5px;line-height:22.5px;letter-spacing:2.75px;left:523.8px;">Item</span>
<svg style="left:745.6px;top:1246.6px;color:#4b78bd;" width="24.6" height="17"><use href="#chevds"/></svg>
<svg style="left:528px;top:1305.0px;" width="12" height="12"><use href="#star"/></svg>
<span id="t75" style="top:1305.2px;font-size:24px;line-height:24px;font-weight:700;color:#444;letter-spacing:1.20px;left:543.5px;">Item:</span>
<span id="t76" style="top:1360.7px;font-size:24px;line-height:24px;letter-spacing:1.03px;left:523.0px;">P-896</span>
<div style="left:520px;top:1393px;width:174px;height:2px;background:#363636;"></div>
<svg style="left:709.5px;top:1363.2px;color:#4b78bd;" width="18" height="28"><use href="#chevr"/></svg>
<span id="t77" style="top:1360.7px;font-size:24px;line-height:24px;letter-spacing:-0.14px;left:750.0px;">Rotary PD Pump, 100 GPM, Asceptic</span>
<div style="left:746px;top:1393px;width:697px;height:2px;background:#363636;"></div>
<svg style="left:1455px;top:1361px;color:#4b78bd;" width="28" height="30"><use href="#detail"/></svg>
<span id="t78" style="top:1430.7px;font-size:24px;line-height:24px;color:#454545;letter-spacing:-0.04px;left:523.0px;">Stock Category:</span>
<span id="t79" style="top:1486.7px;font-size:24px;line-height:24px;left:522.0px;transform:scaleX(0.9345);transform-origin:left center;">NS</span>
<div style="left:520px;top:1520px;width:174px;height:2px;background:#dcdcdc;"></div>
<span id="t80" style="top:1556.7px;font-size:24px;line-height:24px;color:#454545;letter-spacing:0.23px;left:523.0px;">Inspection Required?</span>
<svg style="left:520.4px;top:1615.2px;color:#4b78bd;" width="36" height="36"><use href="#cbx"/></svg>
<span id="t81" style="top:1069.2px;font-size:24px;line-height:24px;color:#454545;letter-spacing:0.14px;left:1586.5px;">From Bin:</span>
<span id="t82" style="top:1124.7px;font-size:24px;line-height:24px;letter-spacing:0.90px;left:1586.5px;">2-A</span>
<div style="left:1583px;top:1157.0px;width:174px;height:2px;background:#363636;"></div>
<svg style="left:1765px;top:1123.5px;color:#4b78bd;" width="36" height="36"><use href="#mag"/></svg>
<span id="t83" style="top:1195.2px;font-size:24px;line-height:24px;color:#454545;letter-spacing:0.06px;left:1586.5px;">From Lot:</span>
<div style="left:1583px;top:1283.0px;width:174px;height:2px;background:#dcdcdc;"></div>
<svg style="left:1765px;top:1249.5px;color:#4b78bd;" width="36" height="36"><use href="#mag"/></svg>
<span id="t84" style="top:1321.2px;font-size:24px;line-height:24px;color:#454545;letter-spacing:0.07px;left:1586.5px;">Condition Code:</span>
<div style="left:1583px;top:1409.0px;width:174px;height:2px;background:#dcdcdc;"></div>
<svg style="left:1765px;top:1375.5px;color:#4b78bd;" width="36" height="36"><use href="#mag"/></svg>
<span id="t85" style="top:1447.2px;font-size:24px;line-height:24px;color:#454545;letter-spacing:0.19px;left:1586.5px;">Rotating Asset:</span>
<div style="left:1583px;top:1535.0px;width:174px;height:2px;background:#dcdcdc;"></div>
<svg style="left:1773px;top:1504.9px;color:#4b78bd;" width="18" height="28"><use href="#chevr"/></svg>
<span id="t86" style="top:1573.2px;font-size:24px;line-height:24px;color:#454545;letter-spacing:0.26px;left:1586.5px;">New Asset Number:</span>
<div style="left:1583px;top:1661.0px;width:174px;height:2px;background:#dcdcdc;"></div>
<span id="t87" style="top:1699.2px;font-size:24px;line-height:24px;color:#454545;letter-spacing:0.14px;left:1586.5px;">Shelf Life:</span>
<div style="left:1583px;top:1787.0px;width:174px;height:2px;background:#dcdcdc;"></div>
<span id="t88" style="top:1825.2px;font-size:24px;line-height:24px;color:#454545;letter-spacing:0.16px;left:1586.5px;">Expiration Date:</span>
<div style="left:1583px;top:1913.0px;width:174px;height:2px;background:#dcdcdc;"></div>
<svg style="left:1765px;top:1881.0px;color:#4b78bd;" width="36" height="34"><use href="#cal"/></svg>
<svg style="left:2061.5px;top:1069.0px;" width="12" height="12"><use href="#star"/></svg>
<span id="t89" style="top:1069.2px;font-size:24px;line-height:24px;font-weight:700;color:#444;letter-spacing:0.23px;left:2077.0px;">Quantity:</span>
<span id="t90" style="top:1124.7px;font-size:24px;line-height:24px;letter-spacing:1.28px;right:1135.2px;font-kerning:none;">2.00</span>
<div style="left:2053px;top:1157.0px;width:175px;height:2px;background:#363636;"></div>
<span id="t91" style="top:1195.2px;font-size:24px;line-height:24px;color:#454545;letter-spacing:0.27px;left:2056.5px;">From Issue Unit:</span>
<span id="t92" style="top:1250.7px;font-size:24px;line-height:24px;left:2055.0px;transform:scaleX(0.9321);transform-origin:left center;">EACH</span>
<div style="left:2053px;top:1283.0px;width:175px;height:2px;background:#dcdcdc;"></div>
<span id="t93" style="top:1321.2px;font-size:24px;line-height:24px;color:#454545;letter-spacing:0.37px;left:2056.5px;">To Issue Unit:</span>
<span id="t94" style="top:1376.7px;font-size:24px;line-height:24px;left:2055.0px;transform:scaleX(0.9321);transform-origin:left center;">EACH</span>
<div style="left:2053px;top:1409.0px;width:175px;height:2px;background:#dcdcdc;"></div>
<svg style="left:2061.5px;top:1447.0px;" width="12" height="12"><use href="#star"/></svg>
<span id="t95" style="top:1447.2px;font-size:24px;line-height:24px;font-weight:700;color:#444;letter-spacing:-0.40px;left:2077.0px;">Conversion Factor:</span>
<span id="t96" style="top:1502.7px;font-size:24px;line-height:24px;letter-spacing:1.28px;right:1135.2px;font-kerning:none;">1.00</span>
<div style="left:2053px;top:1535.0px;width:175px;height:2px;background:#363636;"></div>
<span id="t97" style="top:1573.2px;font-size:24px;line-height:24px;color:#454545;letter-spacing:0.12px;left:2056.5px;">Issue Cost Type:</span>
<span id="t98" style="top:1628.7px;font-size:24px;line-height:24px;letter-spacing:-0.17px;left:2055.0px;">FIFO</span>
<div style="left:2053px;top:1661.0px;width:175px;height:2px;background:#dcdcdc;"></div>
<span id="t99" style="top:1699.2px;font-size:24px;line-height:24px;color:#454545;letter-spacing:0.20px;left:2056.5px;">Unit Cost:</span>
<span id="t100" style="top:1754.7px;font-size:24px;line-height:24px;letter-spacing:1.20px;right:1135.3px;font-kerning:none;">58.00</span>
<div style="left:2053px;top:1787.0px;width:175px;height:2px;background:#dcdcdc;"></div>
<span id="t101" style="top:1825.2px;font-size:24px;line-height:24px;color:#454545;letter-spacing:-0.10px;left:2056.5px;">Line Cost:</span>
<span id="t102" style="top:1880.7px;font-size:24px;line-height:24px;letter-spacing:1.23px;right:1135.3px;font-kerning:none;">116.00</span>
<div style="left:2053px;top:1913.0px;width:175px;height:2px;background:#dcdcdc;"></div>
</body></html>
